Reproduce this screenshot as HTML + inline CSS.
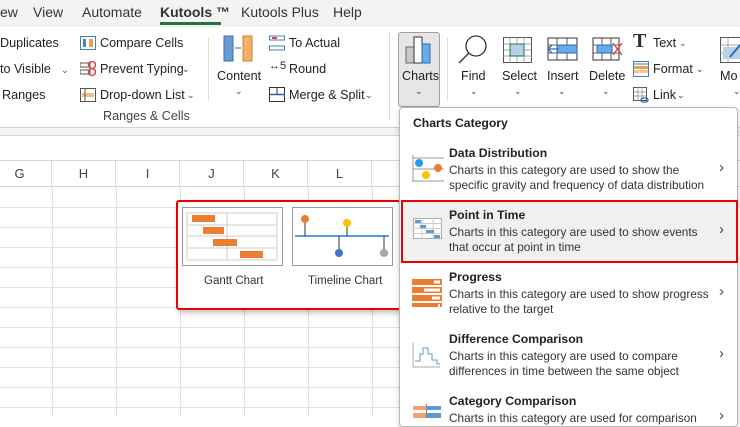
<!DOCTYPE html>
<html><head><meta charset="utf-8"><style>
*{margin:0;padding:0;box-sizing:border-box}
body{width:740px;height:417px;overflow:hidden;position:relative;background:#fff;font-family:"Segoe UI","Liberation Sans",sans-serif;font-size:13px;color:#222}
.a{position:absolute;white-space:nowrap}
.tab{top:4px;font-size:14px;color:#333}
.sm{font-size:12.6px}
.ch{font-size:9px;color:#444}
.col{top:160px;height:27px;width:64px;text-align:center;line-height:27px;color:#444;font-size:13px;border-right:1px solid #ddd}
.hl{left:0;width:400px;height:1px;background:#e1e1e1}
.vl{top:187px;width:1px;height:230px;background:#e1e1e1}
.tt{font-weight:bold;font-size:12.2px;color:#222}
.ds{font-size:11.8px;color:#333;line-height:15px}
.chev{font-size:15px;color:#444}
</style></head><body>
<div class="a" style="left:0;top:0;width:740px;height:27px;background:#f3f3f3"></div>
<div class="a tab" style="left:0">ew</div>
<div class="a tab" style="left:33px">View</div>
<div class="a tab" style="left:82px">Automate</div>
<div class="a tab" style="left:160px;font-weight:bold">Kutools ™</div>
<div class="a" style="left:160px;top:22px;width:61px;height:3px;background:#217346"></div>
<div class="a tab" style="left:241px">Kutools Plus</div>
<div class="a tab" style="left:333px">Help</div>
<div class="a" style="left:0;top:127px;width:740px;height:1px;background:#d0d0d0"></div>
<div class="a" style="left:0;top:128px;width:740px;height:7px;background:#f3f3f3"></div>
<div class="a" style="left:0;top:135px;width:740px;height:1px;background:#d6d6d6"></div>
<div class="a sm" style="left:0;top:36px">Duplicates</div>
<div class="a sm" style="left:0;top:62px">to Visible</div><div class="a ch" style="left:61px;top:65px">⌄</div>
<div class="a sm" style="left:2px;top:88px">Ranges</div>
<svg class="a" style="left:80px;top:36px" width="16" height="14"><rect x=".5" y=".5" width="15" height="13" fill="#fff" stroke="#4a7ebb"/><rect x="3" y="3" width="3" height="8" fill="#4a7ebb"/><rect x="9" y="3" width="4" height="8" fill="#f0a040"/></svg>
<div class="a sm" style="left:100px;top:36px">Compare Cells</div>
<svg class="a" style="left:80px;top:61px" width="16" height="16"><rect x="0" y="2" width="10" height="4" fill="none" stroke="#555"/><rect x="0" y="9" width="10" height="4" fill="none" stroke="#555"/><circle cx="12" cy="4" r="3.5" fill="none" stroke="#e04040" stroke-width="1.5"/><circle cx="12" cy="11" r="3.5" fill="none" stroke="#e04040" stroke-width="1.5"/></svg>
<div class="a sm" style="left:100px;top:62px">Prevent Typing</div><div class="a ch" style="left:182px;top:64px">⌄</div>
<svg class="a" style="left:80px;top:88px" width="16" height="14"><rect x=".5" y=".5" width="15" height="13" fill="#fff" stroke="#555"/><rect x="2" y="5" width="12" height="4" fill="#f0c080"/><line x1="5" y1="0" x2="5" y2="14" stroke="#555"/></svg>
<div class="a sm" style="left:100px;top:88px">Drop-down List</div><div class="a ch" style="left:187px;top:90px">⌄</div>
<div class="a sm" style="left:103px;top:109px;color:#444">Ranges &amp; Cells</div>
<div class="a" style="left:208px;top:38px;width:1px;height:62px;background:#ddd"></div>
<svg class="a" style="left:223px;top:35px" width="32" height="28"><g fill="#6a9bd6" stroke="#3a6cb0"><rect x="1" y="1" width="9" height="25"/></g><g fill="#f4b068" stroke="#d08030"><rect x="20" y="1" width="9" height="25"/></g><line x1="12" y1="13" x2="18" y2="13" stroke="#555"/></svg>
<div class="a sm" style="left:217px;top:69px">Content</div><div class="a ch" style="left:235px;top:86px">⌄</div>
<svg class="a" style="left:269px;top:35px" width="16" height="16"><rect x=".5" y="1" width="15" height="4" fill="none" stroke="#4a7ebb"/><rect x=".5" y="11" width="15" height="4" fill="none" stroke="#4a7ebb"/><rect x="3" y="2" width="5" height="2" fill="#e04040"/></svg>
<div class="a sm" style="left:289px;top:36px">To Actual</div>
<div class="a" style="left:269px;top:60px;font-size:11px">↔5</div>
<div class="a sm" style="left:289px;top:62px">Round</div>
<svg class="a" style="left:269px;top:87px" width="16" height="15"><rect x=".5" y=".5" width="15" height="14" fill="none" stroke="#333"/><line x1="0" y1="7.5" x2="16" y2="7.5" stroke="#2060b0" stroke-width="1.5"/><line x1="8" y1="0" x2="8" y2="7" stroke="#333"/></svg>
<div class="a sm" style="left:289px;top:88px">Merge &amp; Split</div><div class="a ch" style="left:365px;top:90px">⌄</div>
<div class="a" style="left:389px;top:32px;width:1px;height:88px;background:#ddd"></div>
<div class="a" style="left:398px;top:32px;width:42px;height:75px;background:#e6e6e6;border:1px solid #a0a0a0;border-radius:3px"></div>
<svg class="a" style="left:405px;top:36px" width="28" height="28"><rect x="1" y="11" width="8" height="16" fill="#c8c8c8" stroke="#666"/><rect x="9" y="1" width="8" height="26" fill="#fff" stroke="#333"/><rect x="17" y="8" width="8" height="19" fill="#6aaae8" stroke="#2a6ab0"/></svg>
<div class="a sm" style="left:402px;top:69px">Charts</div><div class="a ch" style="left:415px;top:86px">⌄</div>
<div class="a" style="left:447px;top:38px;width:1px;height:62px;background:#ddd"></div>
<svg class="a" style="left:457px;top:35px" width="32" height="30"><circle cx="19" cy="11" r="10" fill="#fff" stroke="#333" stroke-width="1.3"/><line x1="12" y1="18" x2="2" y2="28" stroke="#333" stroke-width="1.3"/></svg>
<div class="a sm" style="left:461px;top:69px">Find</div><div class="a ch" style="left:470px;top:86px">⌄</div>
<svg class="a" style="left:503px;top:37px" width="30" height="27"><rect x=".5" y=".5" width="28" height="25" fill="#fff" stroke="#555"/><path d="M0 7h29M0 13h29M0 19h29M7 0v26M14 0v26M21 0v26" stroke="#888" stroke-width=".7"/><rect x="7" y="7" width="14" height="12" fill="#b8d0e8" stroke="#217346"/></svg>
<div class="a sm" style="left:502px;top:69px">Select</div><div class="a ch" style="left:514px;top:86px">⌄</div>
<svg class="a" style="left:547px;top:37px" width="32" height="25"><rect x="1" y="1" width="29" height="22" fill="#fff" stroke="#333"/><path d="M1 8h29M1 16h29M10 1v22M20 1v22" stroke="#333" stroke-width=".8"/><rect x="10" y="8" width="20" height="8" fill="#6aaae8" stroke="#2a6ab0"/><path d="M12 12H1M5 8l-4 4 4 4" stroke="#2a6ab0" fill="none" stroke-width="1.3"/></svg>
<div class="a sm" style="left:547px;top:69px">Insert</div><div class="a ch" style="left:558px;top:86px">⌄</div>
<svg class="a" style="left:592px;top:37px" width="32" height="25"><rect x="1" y="1" width="26" height="22" fill="#fff" stroke="#333"/><path d="M1 8h26M1 16h26M10 1v22M19 1v22" stroke="#333" stroke-width=".8"/><rect x="5" y="8" width="15" height="8" fill="#6aaae8" stroke="#2a6ab0"/><path d="M21 6l9 12M30 6l-9 12" stroke="#e04040" stroke-width="1.3"/></svg>
<div class="a sm" style="left:589px;top:69px">Delete</div><div class="a ch" style="left:602px;top:86px">⌄</div>
<div class="a" style="left:633px;top:30px;font-size:20px;font-weight:bold;font-family:'Liberation Serif',serif;color:#333">T</div>
<div class="a sm" style="left:653px;top:36px">Text</div><div class="a ch" style="left:679px;top:38px">⌄</div>
<svg class="a" style="left:633px;top:61px" width="16" height="16"><rect x=".5" y=".5" width="15" height="15" fill="#fff" stroke="#4a7ebb"/><rect x="1" y="5" width="14" height="3" fill="#f0a040"/><rect x="1" y="9" width="14" height="3" fill="#f4c890"/><path d="M1 3h14" stroke="#4a7ebb"/></svg>
<div class="a sm" style="left:653px;top:62px">Format</div><div class="a ch" style="left:696px;top:64px">⌄</div>
<svg class="a" style="left:633px;top:87px" width="16" height="16"><rect x=".5" y=".5" width="13" height="13" fill="#fff" stroke="#555"/><path d="M0 5h14M0 9h14M5 0v14M9 0v14" stroke="#888" stroke-width=".7"/><rect x="8" y="11" width="7" height="4" rx="2" fill="none" stroke="#2a6ab0" stroke-width="1.3"/></svg>
<div class="a sm" style="left:653px;top:88px">Link</div><div class="a ch" style="left:677px;top:90px">⌄</div>
<svg class="a" style="left:720px;top:37px" width="20" height="26"><rect x=".5" y=".5" width="22" height="25" fill="#fff" stroke="#555"/><path d="M0 8h22M0 16h22M8 0v26" stroke="#888" stroke-width=".7"/><rect x="3" y="10" width="17" height="12" fill="#b8d0e8"/><path d="M10 20l10-12" stroke="#2a6ab0" stroke-width="2"/></svg>
<div class="a sm" style="left:720px;top:69px">Mo</div><div class="a ch" style="left:733px;top:86px">⌄</div>
<div class="a" style="left:0;top:160px;width:740px;height:27px;background:#fff;border-top:1px solid #d6d6d6;border-bottom:1px solid #d6d6d6"></div>
<div class="a col" style="left:-12px">G</div><div class="a col" style="left:52px">H</div><div class="a col" style="left:116px">I</div><div class="a col" style="left:180px">J</div><div class="a col" style="left:244px">K</div><div class="a col" style="left:308px">L</div>
<div class="a vl" style="left:52px"></div><div class="a vl" style="left:116px"></div><div class="a vl" style="left:180px"></div><div class="a vl" style="left:244px"></div><div class="a vl" style="left:308px"></div><div class="a vl" style="left:372px"></div>
<div class="a hl" style="top:207px"></div><div class="a hl" style="top:227px"></div><div class="a hl" style="top:247px"></div><div class="a hl" style="top:267px"></div><div class="a hl" style="top:287px"></div><div class="a hl" style="top:307px"></div><div class="a hl" style="top:327px"></div><div class="a hl" style="top:347px"></div><div class="a hl" style="top:367px"></div><div class="a hl" style="top:387px"></div><div class="a hl" style="top:407px"></div>
<div class="a" style="left:176px;top:200px;width:225px;height:110px;background:#fff;border:2px solid #e00;border-radius:3px;box-shadow:2px 3px 6px rgba(0,0,0,.25)"></div>
<svg class="a" style="left:182px;top:207px" width="102" height="60"><rect x=".5" y=".5" width="100" height="58" fill="#fff" stroke="#999"/><rect x="5" y="6" width="90" height="47" fill="none" stroke="#ccc"/><path d="M5 18h90M5 29h90M5 41h90M45 6v47" stroke="#ccc"/><g fill="#ed7d31"><rect x="10" y="8" width="23" height="7"/><rect x="21" y="20" width="21" height="7"/><rect x="31" y="32" width="24" height="7"/><rect x="58" y="44" width="23" height="7"/></g></svg>
<svg class="a" style="left:292px;top:207px" width="102" height="60"><rect x=".5" y=".5" width="100" height="58" fill="#fff" stroke="#999"/><line x1="3" y1="29" x2="97" y2="29" stroke="#5b9bd5" stroke-width="2"/><g stroke="#333"><path d="M13 12v17M55 16v13M47 29v17M92 29v17"/></g><circle cx="13" cy="12" r="4" fill="#ed7d31"/><circle cx="55" cy="16" r="4" fill="#ffc000"/><circle cx="47" cy="46" r="4" fill="#4472c4"/><circle cx="92" cy="46" r="4" fill="#a5a5a5"/></svg>
<div class="a" style="left:204px;top:275px;font-size:11.5px;color:#333">Gantt Chart</div>
<div class="a" style="left:308px;top:275px;font-size:11.5px;color:#333">Timeline Chart</div>
<div class="a" style="left:399px;top:107px;width:339px;height:320px;background:#fff;border:1px solid #b8b8b8;border-radius:4px;box-shadow:0 2px 6px rgba(0,0,0,.2)"></div>
<div class="a tt" style="left:413px;top:116px">Charts Category</div>
<svg class="a" style="left:412px;top:155px" width="32" height="28"><path d="M1 0v27M1 3h31M1 14h31M1 26h31" stroke="#999"/><circle cx="7" cy="8" r="4" fill="#1ea0f0"/><circle cx="26" cy="13" r="4" fill="#ed7d31"/><circle cx="14" cy="20" r="4" fill="#ffc000"/></svg>
<div class="a tt" style="left:449px;top:146px">Data Distribution</div>
<div class="a ds" style="left:449px;top:163px">Charts in this category are used to show the<br>specific gravity and frequency of data distribution</div>
<div class="a chev" style="left:719px;top:159px">›</div>
<div class="a" style="left:401px;top:200px;width:337px;height:63px;background:#f0f0f0;border:2px solid #e00"></div>
<svg class="a" style="left:413px;top:218px" width="30" height="22"><rect x=".5" y=".5" width="28" height="20" fill="#fff" stroke="#aaa"/><path d="M0 5.5h29M0 10.5h29M0 15.5h29M9 0v21M20 0v21" stroke="#ccc"/><g fill="#5b9bd5"><rect x="2" y="2" width="6" height="3"/><rect x="7" y="7" width="6" height="3"/><rect x="13" y="12" width="8" height="3"/><rect x="21" y="17" width="6" height="3"/></g></svg>
<div class="a tt" style="left:449px;top:208px">Point in Time</div>
<div class="a ds" style="left:449px;top:225px">Charts in this category are used to show events<br>that occur at point in time</div>
<div class="a chev" style="left:719px;top:221px">›</div>
<svg class="a" style="left:412px;top:279px" width="30" height="28"><g fill="#ed7d31"><rect x="0" y="0" width="30" height="6"/><rect x="0" y="8" width="30" height="6"/><rect x="0" y="16" width="30" height="6"/><rect x="0" y="24" width="30" height="5"/></g><g fill="#fff"><rect x="22" y="1.5" width="6" height="3"/><rect x="12" y="9.5" width="16" height="3"/><rect x="20" y="17.5" width="8" height="3"/><rect x="26" y="25" width="2" height="3"/></g></svg>
<div class="a tt" style="left:449px;top:270px">Progress</div>
<div class="a ds" style="left:449px;top:287px">Charts in this category are used to show progress<br>relative to the target</div>
<div class="a chev" style="left:719px;top:283px">›</div>
<svg class="a" style="left:412px;top:343px" width="30" height="26"><path d="M1 0v24h27" stroke="#aaa" fill="none"/><path d="M3 18h5v-7h3V5h5v6h4v6h5v4h3" stroke="#5b9bd5" fill="none"/></svg>
<div class="a tt" style="left:449px;top:332px">Difference Comparison</div>
<div class="a ds" style="left:449px;top:349px">Charts in this category are used to compare<br>differences in time between the same object</div>
<div class="a chev" style="left:719px;top:345px">›</div>
<svg class="a" style="left:412px;top:404px" width="30" height="14"><rect x="1" y="2" width="13" height="4" fill="#f4a070"/><rect x="15" y="2" width="14" height="4" fill="#5b9bd5"/><rect x="1" y="9" width="13" height="5" fill="#f4a070"/><rect x="15" y="9" width="14" height="5" fill="#5b9bd5"/><path d="M14.5 0v14" stroke="#888"/></svg>
<div class="a tt" style="left:449px;top:394px">Category Comparison</div>
<div class="a ds" style="left:449px;top:411px">Charts in this category are used for comparison</div>
<div class="a chev" style="left:719px;top:407px">›</div>
</body></html>
